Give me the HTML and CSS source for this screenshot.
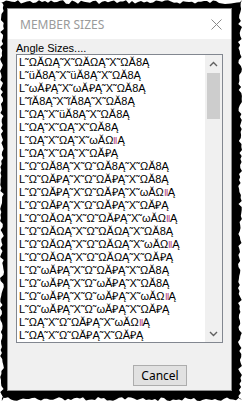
FILE: index.html
```html
<!DOCTYPE html>
<html>
<head>
<meta charset="utf-8">
<link rel="stylesheet" href="styles.css">
</head>
<body>
<div class="frame" id="frame">
  <div class="dialog">
    <div class="titlebar">
      <span class="title">MEMBER SIZES</span>
      <svg class="close" width="11" height="11" viewBox="0 0 11 11"><path d="M0.5 0.5 L10.5 10.5 M10.5 0.5 L0.5 10.5" stroke="#8a8a8a" stroke-width="1" fill="none"/></svg>
    </div>
    <div class="body">
      <div class="label">Angle Sizes....</div>
      <div class="listbox">
        <ul class="items">
          <li>L˜ΩĂΩĄ˜X˜ΩĂΩĄ˜X˜ΩĂ8Ą</li>
          <li>L˜üĂ8Ą˜X˜üĂ8Ą˜X˜ΩĂ8Ą</li>
          <li>L˜ωĂ₽Ą˜X˜ωĂ₽Ą˜X˜ΩĂ8Ą</li>
          <li>L˜ĩĂ8Ą˜X˜ĩĂ8Ą˜X˜ΩĂ8Ą</li>
          <li>L˜ΩĄ˜X˜üĂ8Ą˜X˜ΩĂ8Ą</li>
          <li>L˜ΩĄ˜X˜ΩĄ˜X˜ΩĂ8Ą</li>
          <li>L˜ΩĄ˜X˜ΩĄ˜X˜ωĂΩ<span class="tofu">Ⅱ</span>Ą</li>
          <li>L˜ΩĄ˜X˜ΩĄ˜X˜ΩĂ₽Ą</li>
          <li>L˜Ω˜ΩĂ8Ą˜X˜Ω˜ΩĂ8Ą˜X˜ΩĂ8Ą</li>
          <li>L˜Ω˜ΩĂ₽Ą˜X˜Ω˜ΩĂ₽Ą˜X˜ΩĂ8Ą</li>
          <li>L˜Ω˜ΩĂ₽Ą˜X˜Ω˜ΩĂ₽Ą˜X˜ωĂΩ<span class="tofu">Ⅱ</span>Ą</li>
          <li>L˜Ω˜ΩĂ₽Ą˜X˜Ω˜ΩĂ₽Ą˜X˜ΩĂ₽Ą</li>
          <li>L˜Ω˜ΩĂΩĄ˜X˜Ω˜ΩĂ₽Ą˜X˜ωĂΩ<span class="tofu">Ⅱ</span>Ą</li>
          <li>L˜Ω˜ΩĂΩĄ˜X˜Ω˜ΩĂΩĄ˜X˜ΩĂ8Ą</li>
          <li>L˜Ω˜ΩĂΩĄ˜X˜Ω˜ΩĂΩĄ˜X˜ωĂΩ<span class="tofu">Ⅱ</span>Ą</li>
          <li>L˜Ω˜ΩĂΩĄ˜X˜Ω˜ΩĂΩĄ˜X˜ΩĂ₽Ą</li>
          <li>L˜Ω˜ωĂ₽Ą˜X˜Ω˜ΩĂ₽Ą˜X˜ΩĂ8Ą</li>
          <li>L˜Ω˜ωĂ₽Ą˜X˜Ω˜ωĂ₽Ą˜X˜ΩĂ8Ą</li>
          <li>L˜Ω˜ωĂ₽Ą˜X˜Ω˜ωĂ₽Ą˜X˜ωĂΩ<span class="tofu">Ⅱ</span>Ą</li>
          <li>L˜Ω˜ωĂ₽Ą˜X˜Ω˜ωĂ₽Ą˜X˜ΩĂ₽Ą</li>
          <li>L˜ΩĄ˜X˜Ω˜ΩĂ₽Ą˜X˜ωĂΩ<span class="tofu">Ⅱ</span>Ą</li>
          <li>L˜ΩĄ˜X˜Ω˜ΩĂ₽Ą˜X˜ΩĂ₽Ą</li>
        </ul>
        <div class="scrollbar">
          <div class="arrow"><svg width="9" height="6" viewBox="0 0 9 6"><path d="M1 5 L4.5 1.5 L8 5" stroke="#606060" stroke-width="1.4" fill="none"/></svg></div>
          <div class="track">
            <div class="thumb"></div>
          </div>
          <div class="arrow"><svg width="9" height="6" viewBox="0 0 9 6"><path d="M1 1 L4.5 4.5 L8 1" stroke="#606060" stroke-width="1.4" fill="none"/></svg></div>
        </div>
      </div>
      <div class="footer">
        <button class="btn">Cancel</button>
      </div>
    </div>
  </div>
</div>
<script src="script.js"></script>
</body>
</html>
```

FILE: styles.css
```css
html, body {
  margin: 0;
  padding: 0;
  background: #ffffff;
}
.frame {
  width: 242px;
  height: 401px;
  box-sizing: border-box;
  background: #000000;
  padding: 8px 10px 10px 7px;
}
.dialog {
  width: 225px;
  height: 383px;
  box-sizing: border-box;
  border: 1px solid #8c8c8c;
  background: #f0f0f0;
  display: flex;
  flex-direction: column;
}
.titlebar {
  height: 30px;
  background: #ffffff;
  display: flex;
  align-items: center;
  justify-content: space-between;
  padding: 0 9px 0 12px;
}
.title {
  font-family: "Noto Sans", "Open Sans", sans-serif;
  font-size: 12px;
  color: #9a9a9a;
}
.close {
  display: block;
}
.body {
  flex: 1;
  display: flex;
  flex-direction: column;
  padding: 3px 0 0 8px;
}
.label {
  font-family: "Liberation Sans", Arial, sans-serif;
  font-size: 11px;
  line-height: 12px;
  color: #000000;
  height: 12px;
}
.listbox {
  width: 207px;
  height: 289px;
  box-sizing: border-box;
  border: 1px solid #828790;
  background: #ffffff;
  display: flex;
}
.items {
  list-style: none;
  margin: 0;
  padding: 1px 0 0 2px;
  flex: 1;
  overflow: hidden;
  font-family: "Liberation Sans", Arial, sans-serif;
  font-size: 11px;
  line-height: 13px;
  color: #000000;
  white-space: nowrap;
}
.items li {
  height: 13px;
}
.tofu {
  color: #b0407a;
  font-size: 9px;
}
.scrollbar {
  width: 17px;
  background: #f0f0f0;
  display: flex;
  flex-direction: column;
}
.arrow {
  height: 17px;
  display: flex;
  align-items: center;
  justify-content: center;
}
.track {
  flex: 1;
  padding: 1px 2px 0 2px;
}
.thumb {
  height: 46px;
  background: #cdcdcd;
}
.footer {
  display: flex;
  padding: 22px 0 0 117px;
}
.btn {
  width: 54px;
  height: 21px;
  box-sizing: border-box;
  border: 1px solid #adadad;
  background: #e1e1e1;
  font-family: "Noto Sans", "Open Sans", sans-serif;
  font-size: 12px;
  color: #000000;
  padding: 0;
  margin: 0;
  line-height: 18px;
}
```

FILE: script.js
```js
(function () {
  var seed = 7;
  function rnd() {
    seed = (seed * 9301 + 49297) % 233280;
    return seed / 233280;
  }
  var W = 242, H = 401, pts = [];
  var x, y;
  for (x = 0; x <= W; x += 3) pts.push([x, rnd() * 4]);
  for (y = 0; y <= H; y += 3) pts.push([W - rnd() * 4, y]);
  for (x = W; x >= 0; x -= 3) pts.push([x, H - rnd() * 4]);
  for (y = H; y >= 0; y -= 3) pts.push([rnd() * 4, y]);
  var s = pts.map(function (p) { return p[0].toFixed(1) + 'px ' + p[1].toFixed(1) + 'px'; }).join(',');
  document.getElementById('frame').style.clipPath = 'polygon(' + s + ')';
})();
```
